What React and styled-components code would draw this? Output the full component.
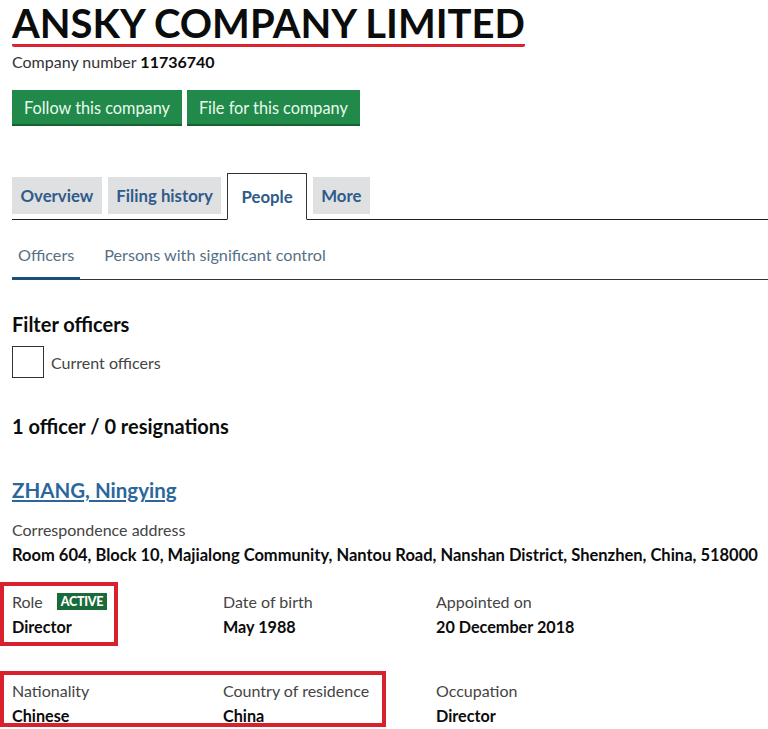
import React from 'react'
import styled, { createGlobalStyle } from 'styled-components'

const GlobalStyle = createGlobalStyle`
  body {
    margin: 0;
    background: #fff;
    font-family: Lato, "Liberation Sans", Arial, sans-serif;
    color: #0b0c0c;
  }
`;

const Page = styled.div`
  padding: 0 0 0 12px;
  overflow: hidden;
  height: 729px;
`;

const Title = styled.h1`
  display: inline-block;
  margin: 2px 0 0;
  font-size: 40px;
  line-height: 42px;
  font-weight: 700;
  color: #0b0c0c;
  border-bottom: 3px solid #d9232e;
  border-radius: 2px;
`;

const CompanyNumber = styled.p`
  margin: 5px 0 0;
  font-size: 16px;
  color: #333;
  strong { color: #0b0c0c; }
`;

const ButtonRow = styled.div`
  display: flex;
  gap: 5px;
  margin-top: 19px;
`;

const GreenButton = styled.button`
  background: #21894a;
  color: #eafbee;
  border: none;
  border-bottom: 2px solid #14632c;
  height: 36px;
  padding: 0 12px;
  font-family: inherit;
  font-size: 16.3px;
`;

const Tabs = styled.div`
  display: flex;
  align-items: flex-end;
  gap: 6px;
  margin-top: 47px;
  border-bottom: 1px solid #222;
`;

const Tab = styled.div`
  height: ${p => (p.$active ? '47px' : '37px')};
  margin-bottom: ${p => (p.$active ? '-1px' : '5px')};
  padding: 0 ${p => (p.$active ? '13px' : '8.5px')};
  display: flex;
  align-items: center;
  box-sizing: border-box;
  background: ${p => (p.$active ? '#fff' : '#dfe0e2')};
  border: ${p => (p.$active ? '1px solid #333' : 'none')};
  border-bottom: ${p => (p.$active ? '1px solid #fff' : 'none')};
  color: #2f5b8a;
  font-weight: 700;
  font-size: 16.8px;
`;

const SubTabs = styled.div`
  display: flex;
  margin-top: 21px;
  border-bottom: 1px solid #333;
`;

const SubTab = styled.div`
  padding: 4px 6px 13px;
  margin-right: 18px;
  font-size: 16.2px;
  color: #566f85;
  border-bottom: 3px solid ${p => (p.$active ? '#1d4f78' : 'transparent')};
  margin-bottom: -1px;
`;

const Heading = styled.h2`
  margin: ${p => p.$top || '34px'} 0 0;
  font-size: 20px;
  font-weight: 700;
  color: #0b0c0c;
`;

const CheckRow = styled.label`
  display: flex;
  align-items: center;
  gap: 7px;
  margin-top: 10px;
  font-size: 16px;
  color: #444;
`;

const CheckBox = styled.span`
  width: 30px;
  height: 30px;
  border: 1px solid #333;
  display: inline-block;
`;

const OfficerLink = styled.a`
  display: inline-block;
  margin-top: 40px;
  font-size: 20.5px;
  font-weight: 700;
  color: #2b669c;
  text-decoration: underline;
  text-underline-offset: 2px;
`;

const Label = styled.div`
  font-size: 16px;
  color: #444;
  display: flex;
  align-items: center;
  gap: 14px;
`;

const Value = styled.div`
  margin-top: 6px;
  font-size: ${p => (p.$large ? '16.5px' : '16.2px')};
  font-weight: 700;
  color: #0b0c0c;
`;

const Address = styled.div`
  margin-top: 18px;
`;

const Details = styled.div`
  position: relative;
  margin-top: 27px;
  display: grid;
  grid-template-columns: 211px 213px 1fr;
  row-gap: 45px;
`;

const Badge = styled.span`
  background: #1b6b3a;
  color: #fff;
  font-size: 12.5px;
  font-weight: 900;
  padding: 1px 4px;
  letter-spacing: -0.3px;
`;

const Highlight = styled.div`
  position: absolute;
  border: 4px solid #d9212e;
  pointer-events: none;
  box-sizing: border-box;
`;

const Cell = styled.div``;

export default function App() {
  return (
    <>
      <GlobalStyle />
      <Page>
        <Title>ANSKY COMPANY LIMITED</Title>
        <CompanyNumber>Company number <strong>11736740</strong></CompanyNumber>
        <ButtonRow>
          <GreenButton>Follow this company</GreenButton>
          <GreenButton>File for this company</GreenButton>
        </ButtonRow>

        <Tabs>
          <Tab>Overview</Tab>
          <Tab>Filing history</Tab>
          <Tab $active>People</Tab>
          <Tab>More</Tab>
        </Tabs>

        <SubTabs>
          <SubTab $active>Officers</SubTab>
          <SubTab>Persons with significant control</SubTab>
        </SubTabs>

        <Heading $top="32px">Filter officers</Heading>
        <CheckRow>
          <CheckBox />
          Current officers
        </CheckRow>

        <Heading $top="36px">1 officer / 0 resignations</Heading>

        <OfficerLink href="#">ZHANG, Ningying</OfficerLink>

        <Address>
          <Label>Correspondence address</Label>
          <Value $large>Room 604, Block 10, Majialong Community, Nantou Road, Nanshan District, Shenzhen, China, 518000</Value>
        </Address>

        <Details>
          <Cell>
            <Label>Role <Badge>ACTIVE</Badge></Label>
            <Value>Director</Value>
          </Cell>
          <Cell>
            <Label>Date of birth</Label>
            <Value>May 1988</Value>
          </Cell>
          <Cell>
            <Label>Appointed on</Label>
            <Value>20 December 2018</Value>
          </Cell>
          <Cell>
            <Label>Nationality</Label>
            <Value>Chinese</Value>
          </Cell>
          <Cell>
            <Label>Country of residence</Label>
            <Value>China</Value>
          </Cell>
          <Cell>
            <Label>Occupation</Label>
            <Value>Director</Value>
          </Cell>
          <Highlight style={{ left: -12, top: -10, width: 118, height: 64 }} />
          <Highlight style={{ left: -12, top: 79, width: 386, height: 56 }} />
        </Details>
      </Page>
    </>
  )
}
